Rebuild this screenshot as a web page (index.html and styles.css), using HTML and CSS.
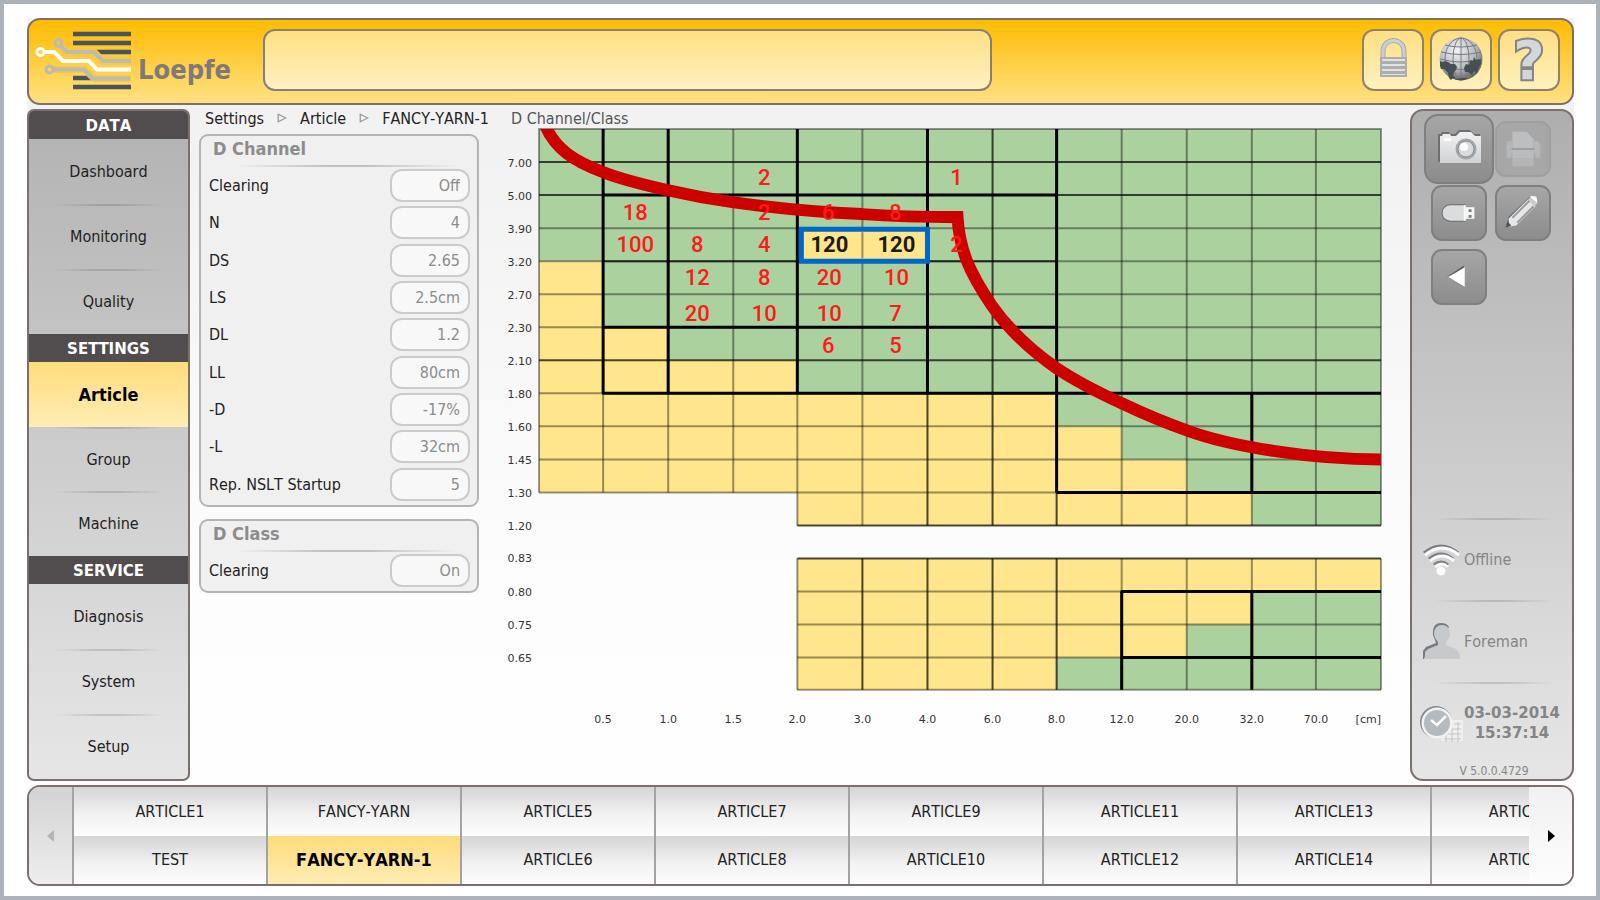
FILE: index.html
```html
<!DOCTYPE html>
<html lang="en">
<head>
<meta charset="utf-8">
<title>Loepfe – Article settings</title>
<link rel="stylesheet" href="styles.css">
</head>
<body>
<div class="screen">
  <header class="topbar">
    <svg class="logo-mark" viewBox="34 30 98 62" aria-hidden="true">
      <path d="M72 35h58M72 44h58M92 53h38M72 79h20M72 88h58" stroke="#48545c" stroke-width="4.500" fill="none"/>
      <path d="M60 47l6 6h27l9 9h28M53 70.500h31l9 9h37" stroke="#fcc93a" stroke-width="7" fill="none"/>
      <g fill="none" stroke="#b9bbb9" stroke-width="4">
        <circle cx="57.500" cy="44" r="3.500" stroke-width="3"/>
        <path d="M60 47l6 6h27l9 9h28"/>
        <circle cx="48.500" cy="70.500" r="3.500" stroke-width="3"/>
        <path d="M52 70.500h31l9 9h37"/>
      </g>
      <g fill="none" stroke="#fff" stroke-width="4">
        <circle cx="39.500" cy="53" r="3.500" stroke-width="3"/>
        <path d="M43 53h10l9 9h26l8 8.500h34"/>
      </g>
    </svg>
    <span class="logo-name">Loepfe</span>
    <input class="message" type="text" aria-label="Message" readonly>
    <div class="top-actions">
      <button class="top-button" type="button" aria-label="Lock">
        <svg viewBox="0 0 58 58"><path d="M19 27V20a10.500 10.500 0 0 1 21 0v7" fill="none" stroke="#a4a9ae" stroke-width="5"/><path d="M19 27V20a10.500 10.500 0 0 1 21 0v7" fill="none" stroke="#cdd0d3" stroke-width="3"/><path d="M16 26h27v20H16z" fill="#a9aeb3"/><path d="M18 28h23v2H18zM18 33h23v2H18zM18 38h23v2H18zM18 43h23v1H18z" fill="#e2e2df"/></svg>
      </button>
      <button class="top-button" type="button" aria-label="Language">
        <svg viewBox="0 0 58 58">
          <defs><radialGradient id="globe" cx=".4" cy=".3" r=".75"><stop offset="0" stop-color="#f4f4f4"/><stop offset=".6" stop-color="#b4b7ba"/><stop offset="1" stop-color="#50565c"/></radialGradient></defs>
          <circle cx="29" cy="28" r="21.500" fill="url(#globe)"/>
          <g fill="none" stroke="#767b80" stroke-width="1"><ellipse cx="29" cy="28" rx="8" ry="21"/><ellipse cx="29" cy="28" rx="16" ry="21"/><path d="M29 7v42M9 21q20 5 40 0M8 28q21 6 42 0M13 14q16 4 32 0M9 36q20 5 40 0"/></g>
          <path d="M8 30l3 1 2-1 3 1 3 2 4 0 2 3-1 3-2 2-1 6-2 2-2-2-1-5-4-4-3 0-1-3zM32 37l2-4 3 1 1-5 3 1 1-4 2 3 5-1v5l-3 5-1 5-3-3-2 4-4-3-3 0zM17 45l5 0 2 3 6-1 6 0-4 2-7 0z" fill="#474e55"/>
        </svg>
      </button>
      <button class="top-button" type="button" aria-label="Help">
        <svg viewBox="0 0 58 58"><text class="help-mark" x="29" y="48" text-anchor="middle">?</text></svg>
      </button>
    </div>
  </header>

  <div class="middle">
    <nav class="sidebar" aria-label="Main">
      <h2>DATA</h2>
      <a href="#dashboard">Dashboard</a>
      <a href="#monitoring">Monitoring</a>
      <a href="#quality">Quality</a>
      <h2>SETTINGS</h2>
      <a class="active" href="#article">Article</a>
      <a href="#group">Group</a>
      <a href="#machine">Machine</a>
      <h2>SERVICE</h2>
      <a href="#diagnosis">Diagnosis</a>
      <a href="#system">System</a>
      <a href="#setup">Setup</a>
    </nav>

    <main class="content">
      <div class="settings">
        <nav class="breadcrumb" aria-label="Breadcrumb">
          <a href="#settings">Settings</a>
          <svg viewBox="0 0 8 8"><path d="M1 1v6l6-3z"/></svg>
          <a href="#article">Article</a>
          <svg viewBox="0 0 8 8"><path d="M1 1v6l6-3z"/></svg>
          <a href="#fancy-yarn-1">FANCY-YARN-1</a>
        </nav>
        <section class="panel channel">
          <h3>D Channel</h3>
          <div class="field"><label for="clearing">Clearing</label><input id="clearing" value="Off" readonly></div>
          <div class="field"><label for="n">N</label><input id="n" value="4" readonly></div>
          <div class="field"><label for="ds">DS</label><input id="ds" value="2.65" readonly></div>
          <div class="field"><label for="ls">LS</label><input id="ls" value="2.5cm" readonly></div>
          <div class="field"><label for="dl">DL</label><input id="dl" value="1.2" readonly></div>
          <div class="field"><label for="ll">LL</label><input id="ll" value="80cm" readonly></div>
          <div class="field"><label for="md">-D</label><input id="md" value="-17%" readonly></div>
          <div class="field"><label for="ml">-L</label><input id="ml" value="32cm" readonly></div>
          <div class="field"><label for="rep">Rep. NSLT Startup</label><input id="rep" value="5" readonly></div>
        </section>
        <section class="panel">
          <h3>D Class</h3>
          <div class="field"><label for="class-clearing">Clearing</label><input id="class-clearing" value="On" readonly></div>
        </section>
      </div>

      <svg class="chart" viewBox="500 109 896 640" role="img" aria-label="D Channel/Class">
        <defs><clipPath id="plot"><path d="M539 129h842v400H539z"/></clipPath></defs>
        <text class="chart-title" x="512" y="124">D Channel/Class</text>

        <path class="green" d="M540 129h841v396H798v-33H540z"/>
        <path class="green" d="M798 558h583v131H798z"/>
        <path class="yellow" d="M540 261h64v66h65v33h129v33h259v33h65v33h65v33h65v33H798v-33H540z"/>
        <path class="yellow" d="M798 558h583v33h-129v33h-65v33h-130v32H798z"/>

        <path class="thin" d="M540 228h841M540 261h841M540 294h841M540 327h841M540 393h841M540 426h841M540 459h841M540 492h841M798 591h583M798 624h583M798 657h583M798 689h583"/>
        <path class="thin" d="M604 393v99M669 393v99M734 129v363M798 393v132M863 129v396M1122 129v396M1187 129v396M1252 129v396M1316 129v396M1122 558v131M1187 558v131M1252 558v131M1316 558v131"/>
        <path class="thin" d="M540 492V129h841v396M798 558v131M1381 558v131"/>
        <path class="medium" d="M540 162h841M540 195h841M604 261h453M540 360h841M798 525h583M798 558h583"/>
        <path class="medium" d="M928 393v132M993 129v396M1057 492v33M863 558v131M928 558v131M993 558v131M1057 558v131"/>
        <path class="thick" d="M604 129v264M669 129v264M798 129v264M928 129v264M1057 129v363M1252 393v99M1122 591v98M1252 591v98"/>
        <path class="thick" d="M604 195h453M604 327h453M603 393h778M1057 492h324M1121 591h260M1122 657h259"/>

        <path class="curve" clip-path="url(#plot)" d="M543 116C552 150 580 163 604 172C624 180 646 185 668 190C690 195 712 199 733 202C775 208 820 212 863 214C890 216 930 217 958 217C960 250 970 272 992 305C1008 328 1030 349 1057 368C1078 382 1098 392 1122 403C1143 413 1164 422 1187 430C1230 446 1310 459 1381 459"/>
        <path class="selection" d="M802 229h126v32H802z"/>
        <path class="thin" d="M863 232v26"/>

        <g class="counts">
          <text x="765" y="185">2</text><text x="957" y="185">1</text>
          <text x="636" y="220">18</text><text x="765" y="220">2</text><text x="829" y="220">6</text><text x="896" y="220">8</text>
          <text x="636" y="252">100</text><text x="698" y="252">8</text><text x="765" y="252">4</text><text class="picked" x="830" y="252">120</text><text class="picked" x="897" y="252">120</text><text x="957" y="252">2</text>
          <text x="698" y="285">12</text><text x="765" y="285">8</text><text x="830" y="285">20</text><text x="897" y="285">10</text>
          <text x="698" y="321">20</text><text x="765" y="321">10</text><text x="830" y="321">10</text><text x="896" y="321">7</text>
          <text x="829" y="353">6</text><text x="896" y="353">5</text>
        </g>
        <g class="axis-y">
          <text x="533" y="167">7.00</text><text x="533" y="200">5.00</text><text x="533" y="233">3.90</text><text x="533" y="266">3.20</text><text x="533" y="299">2.70</text><text x="533" y="332">2.30</text><text x="533" y="365">2.10</text><text x="533" y="398">1.80</text><text x="533" y="431">1.60</text><text x="533" y="464">1.45</text><text x="533" y="497">1.30</text><text x="533" y="530">1.20</text><text x="533" y="562">0.83</text><text x="533" y="595">0.80</text><text x="533" y="628">0.75</text><text x="533" y="661">0.65</text>
          <text x="1381" y="722">[cm]</text>
        </g>
        <g class="axis-x">
          <text x="604" y="722">0.5</text><text x="669" y="722">1.0</text><text x="734" y="722">1.5</text><text x="798" y="722">2.0</text><text x="863" y="722">3.0</text><text x="928" y="722">4.0</text><text x="993" y="722">6.0</text><text x="1057" y="722">8.0</text><text x="1122" y="722">12.0</text><text x="1187" y="722">20.0</text><text x="1252" y="722">32.0</text><text x="1316" y="722">70.0</text>
        </g>
      </svg>
    </main>

    <aside class="tools">
      <div class="tool-grid">
        <button class="tool large" type="button" aria-label="Screenshot">
          <svg viewBox="0 0 66 66"><defs><linearGradient id="metal" x1="0" y1="0" x2="0" y2="1"><stop offset="0" stop-color="#f2f2f2"/><stop offset="1" stop-color="#cfd2d4"/></linearGradient></defs><path d="M12 18h3l1-2h7l1 2h5l4-4h11l4 4h6v28H12z" fill="#6d6f71"/><path d="M14 20h2l1-2h7l1 2h5l4-4h11l4 4h6v27H14z" fill="url(#metal)"/><path d="M18 22h7v3h-7z" fill="#fff"/><circle cx="40" cy="33" r="10.500" fill="#a5a8aa"/><circle cx="40" cy="33" r="8" fill="#d9dbdc" stroke="#8a8d8f"/><circle cx="38" cy="31" r="4" fill="#fff"/></svg>
        </button>
        <button class="tool" type="button" aria-label="Print" disabled>
          <svg viewBox="0 0 54 54"><path d="M16 9h15l7 8v9H16z" fill="#bcbebf"/><path d="M11 19h5v8h22v-8h5l2 3v14h-5v-4H15v4h-5V22z" fill="#b5b7b8"/><path d="M15 26h24v2H15z" fill="#9c9e9f"/><path d="M16 28h22v9H16z" fill="#babcbd"/><path d="M16 37h22v8H16z" fill="#b3b5b6"/></svg>
        </button>
        <button class="tool" type="button" aria-label="USB">
          <svg viewBox="0 0 54 54"><path d="M17 18h17v18H17q-8-2-8-9t8-9z" fill="#6d6f71"/><path d="M18 19h16v16H18q-8-1-8-8t8-8z" fill="#dadcdd"/><path d="M34 21h9v12h-9z" fill="#f5f5f5"/><path d="M37 23h3v3h-3zM37 29h3v3h-3z" fill="#77797b"/><path d="M32 19h2v16h-2z" fill="#fff"/></svg>
        </button>
        <button class="tool" type="button" aria-label="Edit">
          <svg viewBox="0 0 54 54"><path d="M9 42l3-11 22-21 7 6-20 21z" fill="#6b6d6f"/><path d="M12 33L32 13l8 7-20 20-7 1z" fill="#e6e7e8"/><path d="M16 32l18-18M21 37l17-17" stroke="#979a9c" stroke-width="2"/><path d="M32 13l3-3 7 7-3 3z" fill="#c9cbcd"/><path d="M35 9l6 1 1 7-7-6z" fill="#fff"/><path d="M9 42l2-6 4 4z" fill="#505254"/></svg>
        </button>
        <button class="tool" type="button" aria-label="Back">
          <svg viewBox="0 0 54 54"><path d="M14 27l18-12v5z" fill="#5d5f61"/><path d="M16 27l17-10v20z" fill="#fff"/></svg>
        </button>
      </div>
      <div class="statuses">
        <div class="status">
          <svg viewBox="0 0 40 40"><g fill="none" stroke="#7b7f84" stroke-width="3"><path d="M2 14q17-14 34 0M7 20q12-10 24 0M12 26q7-6 14 0"/></g><g fill="none" stroke="#fafafa" stroke-width="3"><path d="M3 16q17-14 34 0M8 22q12-10 24 0M13 28q7-6 13 0"/></g><circle cx="19" cy="32" r="4.500" fill="#fff"/></svg>
          <span>Offline</span>
        </div>
        <div class="status">
          <svg viewBox="0 0 40 40"><path d="M1 38v-8l3-4 10-4-3-8q-1-12 8-12 6 0 8 4L16 20l1 5-12 5-3 8z" fill="#777b80"/><path d="M3 38v-7l3-3 10-4v-3q-4-4-4-9 1-8 8-8t8 8q0 6-4 9v3l10 4 4 5v5z" fill="#c6cacd"/></svg>
          <span>Foreman</span>
        </div>
        <div class="status">
          <svg viewBox="0 0 40 40"><path d="M30 17h11v21H19v-6z" fill="#efefef"/><path d="M22 31h17M22 36h17M32 21h7M30 26h9M24 30v9M30 26v13M36 19v20" stroke="#c3c6c8" fill="none"/><circle cx="14" cy="19" r="16" fill="#858a8e"/><circle cx="15" cy="20" r="15.500" fill="#f2f2f2"/><circle cx="15" cy="20" r="13" fill="#b5babf"/><path d="M9 17l6 5 9-9" fill="none" stroke="#fff" stroke-width="2.500"/></svg>
          <time datetime="2014-03-03T15:37:14">03-03-2014<br>15:37:14</time>
        </div>
      </div>
      <p class="version">V 5.0.0.4729</p>
    </aside>
  </div>

  <footer class="articles">
    <button class="scroll previous" type="button" aria-label="Previous" disabled><svg viewBox="0 0 8 12"><path d="M7 0v12L0 6z"/></svg></button>
    <div class="article-strip">
      <button type="button">ARTICLE1</button><button type="button">TEST</button>
      <button type="button">FANCY-YARN</button><button class="active" type="button">FANCY-YARN-1</button>
      <button type="button">ARTICLE5</button><button type="button">ARTICLE6</button>
      <button type="button">ARTICLE7</button><button type="button">ARTICLE8</button>
      <button type="button">ARTICLE9</button><button type="button">ARTICLE10</button>
      <button type="button">ARTICLE11</button><button type="button">ARTICLE12</button>
      <button type="button">ARTICLE13</button><button type="button">ARTICLE14</button>
      <button type="button">ARTICLE15</button><button type="button">ARTICLE16</button>
    </div>
    <button class="scroll next" type="button" aria-label="Next"><svg viewBox="0 0 8 12"><path d="M1 0v12l7-6z"/></svg></button>
  </footer>
</div>
</body>
</html>
```

FILE: styles.css
```css
* {
  box-sizing: border-box;
}

body {
  margin: 0;
  font-family: "DejaVu Sans Condensed", "Noto Sans", sans-serif;
  font-size: 16px;
  font-kerning: none;
  color: #222;
}

button, input {
  font: inherit;
  font-kerning: none;
  color: inherit;
}

button {
  padding: 0;
  border: 0;
}

a {
  color: inherit;
  text-decoration: none;
}

svg {
  display: block;
}

.screen {
  min-height: 100vh;
  display: flex;
  flex-direction: column;
  gap: 4px;
  padding: 14px 22px 10px 23px;
  border: 4px solid #adb2b9;
  background: linear-gradient(#f2f2f2, #f2f2f2 15%, #fdfdfd 65%, #fff) content-box, #fff;
}

.topbar {
  height: 87px;
  display: flex;
  align-items: flex-start;
  padding: 9px 12px 0 6px;
  border: 2px solid #7d6f6c;
  border-radius: 13px;
  background: linear-gradient(#ffbc00, #ffc21a 20%, #ffe184);
}

.logo-mark {
  width: 98px;
  height: 62px;
}

.logo-name {
  width: 130px;
  padding: 25px 0 0 5px;
  font-size: 27px;
  font-weight: bold;
  line-height: 32px;
  color: #80797c;
}

.message {
  flex: 0 1 729px;
  min-width: 0;
  height: 62px;
  padding: 0 16px;
  border: 2px solid #858080;
  border-radius: 12px;
  background: linear-gradient(#ffe083, #fff0c0);
}

.top-actions {
  display: flex;
  gap: 6px;
  margin-left: auto;
}

.top-button {
  width: 62px;
  height: 62px;
  border: 2px solid #8d8270;
  border-radius: 12px;
  background: linear-gradient(#ffdf82, #fff0bf);
}

.help-mark {
  font: bold 54px "DejaVu Sans", sans-serif;
  fill: #d3d6da;
  stroke: #858484;
  stroke-width: 4px;
  paint-order: stroke;
}

.middle {
  flex: 1;
  display: flex;
}

.sidebar {
  flex: 0 0 163px;
  display: flex;
  flex-direction: column;
  overflow: hidden;
  border: 2px solid #7d6f6c;
  border-radius: 7px;
  background: linear-gradient(#b2b2b2, #e6e6e6);
  text-align: center;
}

.sidebar h2 {
  height: 28px;
  margin: 0;
  background: #514d4e;
  color: #fff;
  font-family: "DejaVu Sans", sans-serif;
  font-size: 15px;
  line-height: 30px;
}

.sidebar a {
  flex: 1;
  display: flex;
  align-items: center;
  justify-content: center;
}

.sidebar a + a {
  background: linear-gradient(90deg, transparent, #0002 40%, #0002 60%, transparent) center top / 110px 2px no-repeat;
}

.sidebar a.active {
  background: linear-gradient(#ffdc7c, #ffedb3);
  color: #000;
  font-size: 18px;
  font-weight: bold;
}

.content {
  flex: 1;
  min-width: 0;
  display: flex;
  gap: 20px;
  padding: 0 14px 0 9px;
}

.settings {
  flex: 0 0 280px;
  min-width: 0;
}

.breadcrumb {
  display: flex;
  align-items: center;
  height: 18px;
  margin-bottom: 7px;
  padding-left: 6px;
  white-space: nowrap;
}

.breadcrumb svg {
  flex: none;
  width: 10px;
  height: 10px;
  margin: 0 13px;
  fill: none;
  stroke: #999;
}

.panel {
  display: flex;
  flex-direction: column;
  margin-bottom: 12px;
  padding: 2px 7px 2px 8px;
  border: 2px solid #b4b4b4;
  border-radius: 9px;
  background: #f0f0f0;
}

.panel.channel {
  min-height: 373px;
}

.panel h3 {
  height: 29px;
  margin: 0;
  padding-left: 4px;
  background: linear-gradient(90deg, transparent 10%, #c0c0c0 45%, #c0c0c0 60%, transparent 95%) left bottom / 100% 2px no-repeat;
  color: #8c8c8c;
  font-size: 18px;
  line-height: 22px;
}

.field {
  flex: 1 0 37px;
  display: flex;
  align-items: center;
  justify-content: space-between;
}

.field input {
  width: 80px;
  height: 33px;
  padding: 0 8px;
  border: 2px solid #cbcbcb;
  border-radius: 12px;
  background: #f8f8f8;
  color: #8c8c8c;
  text-align: right;
}

.chart {
  flex: 1;
  min-width: 0;
  align-self: flex-start;
}

.chart-title {
  font-size: 16px;
  fill: #555;
}

.green {
  fill: #abd19f;
}

.yellow {
  fill: #ffe58b;
}

.thin, .medium, .thick, .curve {
  fill: none;
  stroke: #000;
}

.thin {
  stroke-width: 2px;
  stroke-opacity: .4;
}

.medium {
  stroke-width: 2px;
  stroke-opacity: .7;
}

.thick {
  stroke-width: 3px;
}

.curve {
  stroke: #cd0000;
  stroke-width: 12px;
}

.selection {
  fill: #ffe58b;
  stroke: #0068c6;
  stroke-width: 5px;
}

.counts {
  font: 500 22px Roboto, sans-serif;
  fill: #ff1a1a;
  text-anchor: middle;
}

.picked {
  fill: #1c1c14;
  font-weight: bold;
}

.axis-x, .axis-y {
  font: 11px "DejaVu Sans", sans-serif;
  fill: #333;
}

.axis-x {
  text-anchor: middle;
}

.axis-y {
  text-anchor: end;
}

.tools {
  flex: 0 0 164px;
  display: flex;
  flex-direction: column;
  padding: 10px 6px 1px 10px;
  border: 2px solid #7d6f6c;
  border-radius: 13px;
  background: linear-gradient(#aeaeae, #e6e6e6);
  color: #858585;
}

.tool-grid {
  display: grid;
  grid-template-columns: 56px 56px;
  grid-auto-rows: 56px;
  gap: 8px;
  padding-left: 9px;
}

.tool {
  border: 2px solid #7f7f7f;
  border-radius: 11px;
  background: linear-gradient(#a6a6a6, #8c8c8c);
}

.tool.large {
  margin: -7px;
  border-radius: 14px;
}

.tool:disabled {
  border-color: #9f9f9f;
  background: #a7a7a7;
}

.statuses {
  margin-top: auto;
}

.status {
  display: flex;
  align-items: center;
  gap: 2px;
  height: 82px;
  background: linear-gradient(90deg, transparent, #0002 40%, #0002 60%, transparent) center top / 120px 2px no-repeat;
}

.status svg {
  flex: none;
  width: 40px;
  height: 40px;
  overflow: visible;
}

.status time {
  font-family: "DejaVu Sans", sans-serif;
  font-size: 15px;
  font-weight: bold;
  line-height: 20px;
  text-align: center;
}

.version {
  margin: 0;
  font-size: 12px;
  line-height: 14px;
  text-align: center;
}

.articles {
  height: 101px;
  display: flex;
  overflow: hidden;
  border: 2px solid #7d6f6c;
  border-radius: 13px;
  background: #f7f7f7;
}

.scroll {
  flex: 0 0 43px;
  display: flex;
  align-items: center;
  justify-content: center;
}

.scroll svg {
  width: 8px;
  height: 12px;
}

.previous {
  background: linear-gradient(#d3d3d3, #ededed);
  fill: #b5b5b5;
}

.next {
  background: linear-gradient(#f1f1f1, #fdfdfd);
  fill: #000;
}

.article-strip {
  flex: 1;
  min-width: 0;
  display: grid;
  grid-auto-flow: column;
  grid-template-rows: 1fr 1fr;
  grid-auto-columns: 194px;
  overflow: hidden;
}

.article-strip button {
  border-left: 2px solid #a3a3a3;
  background: linear-gradient(#d5d5d5, #f1f1f1 55%, #fdfdfd);
}

.article-strip .active {
  background: linear-gradient(#ffdb7a, #ffedb5);
  color: #000;
  font-size: 18px;
  font-weight: bold;
}
```
